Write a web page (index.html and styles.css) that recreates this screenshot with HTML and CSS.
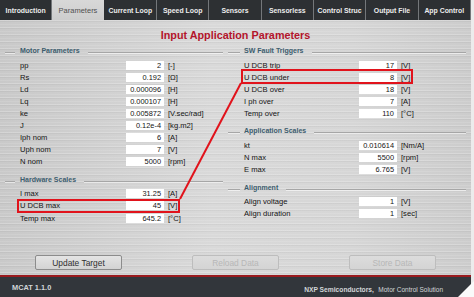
FILE: index.html
```html
<!DOCTYPE html>
<html lang="en">
<head>
  <meta charset="UTF-8">
  <meta name="viewport" content="width=device-width, initial-scale=1.0">
  <title>MCAT - Parameters</title>
  <link rel="stylesheet" href="styles.css">
</head>
<body>
  <div class="app">
    <!-- Tab strip -->
    <nav class="tabs">
      <div class="tab">Introduction</div>
      <div class="tab active">Parameters</div>
      <div class="tab">Current Loop</div>
      <div class="tab">Speed Loop</div>
      <div class="tab">Sensors</div>
      <div class="tab">Sensorless</div>
      <div class="tab">Control Struc</div>
      <div class="tab">Output File</div>
      <div class="tab">App Control</div>
    </nav>

    <main class="panel">
      <h1 class="title">Input Application Parameters</h1>

      <div class="columns">
        <div class="col col-left">
          <section class="group">
            <h2 class="group-head">Motor Parameters</h2>
            <div class="row"><span class="label">pp</span><span class="value">2</span><span class="unit">[-]</span></div>
            <div class="row"><span class="label">Rs</span><span class="value">0.192</span><span class="unit">[Ω]</span></div>
            <div class="row"><span class="label">Ld</span><span class="value">0.000096</span><span class="unit">[H]</span></div>
            <div class="row"><span class="label">Lq</span><span class="value">0.000107</span><span class="unit">[H]</span></div>
            <div class="row"><span class="label">ke</span><span class="value">0.005872</span><span class="unit">[V.sec/rad]</span></div>
            <div class="row"><span class="label">J</span><span class="value">0.12e-4</span><span class="unit">[kg.m2]</span></div>
            <div class="row"><span class="label">Iph nom</span><span class="value">6</span><span class="unit">[A]</span></div>
            <div class="row"><span class="label">Uph nom</span><span class="value">7</span><span class="unit">[V]</span></div>
            <div class="row"><span class="label">N nom</span><span class="value">5000</span><span class="unit">[rpm]</span></div>
          </section>
          <section class="group">
            <h2 class="group-head">Hardware Scales</h2>
            <div class="row"><span class="label">I max</span><span class="value">31.25</span><span class="unit">[A]</span></div>
            <div class="row"><span class="label">U DCB max</span><span class="value">45</span><span class="unit">[V]</span></div>
            <div class="row"><span class="label">Temp max</span><span class="value">645.2</span><span class="unit">[°C]</span></div>
          </section>
        </div>

        <div class="col col-right">
          <section class="group">
            <h2 class="group-head">SW Fault Triggers</h2>
            <div class="row"><span class="label">U DCB trip</span><span class="value">17</span><span class="unit">[V]</span></div>
            <div class="row"><span class="label">U DCB under</span><span class="value">8</span><span class="unit">[V]</span></div>
            <div class="row"><span class="label">U DCB over</span><span class="value">18</span><span class="unit">[V]</span></div>
            <div class="row"><span class="label">I ph over</span><span class="value">7</span><span class="unit">[A]</span></div>
            <div class="row"><span class="label">Temp over</span><span class="value">110</span><span class="unit">[°C]</span></div>
          </section>
          <section class="group">
            <h2 class="group-head">Application Scales</h2>
            <div class="row"><span class="label">kt</span><span class="value">0.010614</span><span class="unit">[Nm/A]</span></div>
            <div class="row"><span class="label">N max</span><span class="value">5500</span><span class="unit">[rpm]</span></div>
            <div class="row"><span class="label">E max</span><span class="value">6.765</span><span class="unit">[V]</span></div>
          </section>
          <section class="group">
            <h2 class="group-head">Alignment</h2>
            <div class="row"><span class="label">Align voltage</span><span class="value">1</span><span class="unit">[V]</span></div>
            <div class="row"><span class="label">Align duration</span><span class="value">1</span><span class="unit">[sec]</span></div>
          </section>
        </div>
      </div>

      <div class="actions">
        <button class="btn">Update Target</button>
        <button class="btn" disabled>Reload Data</button>
        <button class="btn" disabled>Store Data</button>
      </div>

      <!-- Red annotation drawn over the form -->
      <svg class="annotation" width="474" height="255" viewBox="0 0 474 255">
        <rect x="18" y="180" width="161" height="12" />
        <rect x="242" y="50" width="170" height="13" />
        <line x1="180" y1="179" x2="241" y2="63" />
      </svg>
    </main>

    <footer class="footer">
      <span class="version">MCAT 1.1.0</span>
      <span class="vendor"><b>NXP Semiconductors,</b> <small>Motor Control Solution</small></span>
    </footer>
  </div>
</body>
</html>
```

FILE: styles.css
```css
/* General */
body {
  margin: 0;
  background: #ececec;
  font-family: 'Liberation Sans', Arial, sans-serif;
  color: #141414;
}

.app {
  width: 471px;
  height: 297px;
  display: flex;
  flex-direction: column;
}

/* Tab strip */
.tabs {
  display: flex;
  height: 20px;
  background: #2d3033;
}

.tab {
  flex: 1;
  display: flex;
  align-items: center;
  justify-content: center;
  border-right: 1px solid #74777a;
  color: #ececec;
  font-size: 6.9px;
  font-weight: bold;
  white-space: nowrap;
}

.tab.active {
  background: linear-gradient(#d8d8d8, #cdcdcd);
  color: #505050;
  font-weight: normal;
  font-size: 7.5px;
  border-right-color: #2d3033;
}

/* Brushed metal panel */
.panel {
  position: relative;
  height: 255px;
  display: flex;
  flex-direction: column;
  background:
    repeating-linear-gradient(180deg, rgba(255,255,255,0.22) 0 1px, rgba(0,0,0,0.035) 1px 2px, transparent 2px 4px, rgba(255,255,255,0.1) 4px 5px, transparent 5px 7px),
    linear-gradient(90deg, #c9c9c9, #d9d9d9 45%, #d6d6d6 75%, #cccccc);
}

.title {
  margin: 0;
  padding-top: 5px;
  height: 20px;
  line-height: 20px;
  text-align: center;
  font-size: 10.8px;
  font-weight: bold;
  color: #b3142b;
}

.columns {
  display: grid;
  grid-template-columns: 218px 238px;
  column-gap: 5px;
  padding-left: 5px;
}

.group {
  margin-bottom: 6px;
}

.group-head {
  display: flex;
  align-items: flex-start;
  height: 14px;
  margin: 0;
  line-height: 12px;
  font-size: 7px;
  font-weight: bold;
  color: #3d5d6e;
}

.group-head::before,
.group-head::after {
  content: '';
  height: 1px;
  margin-top: 7px;
  background: #a6a6a6;
  box-shadow: 0 1px 0 rgba(255,255,255,0.6);
}

.group-head::before {
  width: 10px;
  margin-right: 5px;
}

.group-head::after {
  flex: 1;
  margin-left: 8px;
}

.col-right .group-head::before {
  width: 12px;
  margin-right: 4px;
}

/* Parameter rows */
.row {
  display: grid;
  grid-template-columns: 102px 38px auto;
  column-gap: 4px;
  align-items: center;
  height: 12.1px;
  padding-left: 15px;
  font-size: 7.6px;
}

.col-right .row {
  grid-template-columns: 111px 38px auto;
  padding-left: 16px;
}

.value {
  height: 9px;
  line-height: 9px;
  padding-right: 3px;
  background: #fff;
  text-align: right;
  font-size: 7.4px;
}

.unit {
  white-space: nowrap;
}

/* Buttons */
.actions {
  display: grid;
  grid-template-columns: repeat(3, 1fr);
  justify-items: center;
  margin-top: auto;
  padding-bottom: 5px;
}

.btn {
  width: 87px;
  height: 15px;
  padding: 0;
  border: 1px solid #8c8c8c;
  border-radius: 2px;
  background: linear-gradient(#e4e4e4, #d3d3d3);
  font-family: inherit;
  font-size: 8.4px;
  color: #2e2e2e;
}

.btn:disabled {
  border-color: #bdbdbd;
  background: linear-gradient(#dcdcdc, #d4d4d4);
  color: #b7b7b7;
}

/* Annotation overlay */
.annotation {
  position: absolute;
  left: 0;
  top: 0;
  pointer-events: none;
}

.annotation rect,
.annotation line {
  fill: none;
  stroke: #e1131c;
  stroke-width: 2;
}

/* Footer */
.footer {
  position: relative;
  display: flex;
  align-items: center;
  justify-content: space-between;
  height: 20px;
  padding: 0 28px 0 12px;
  border-top: 2px solid #9a1a1e;
  background: #32363b;
  color: #d3d6d9;
}

.footer::after {
  content: '';
  position: absolute;
  right: -3px;
  bottom: 0;
  width: 16px;
  height: 16px;
  background: #fafafa;
  clip-path: polygon(100% 0, 100% 100%, 0 100%);
}

.version {
  font-size: 7.4px;
  font-weight: bold;
}

.vendor b {
  font-size: 6.7px;
}

.vendor small {
  font-size: 6.5px;
}
```
